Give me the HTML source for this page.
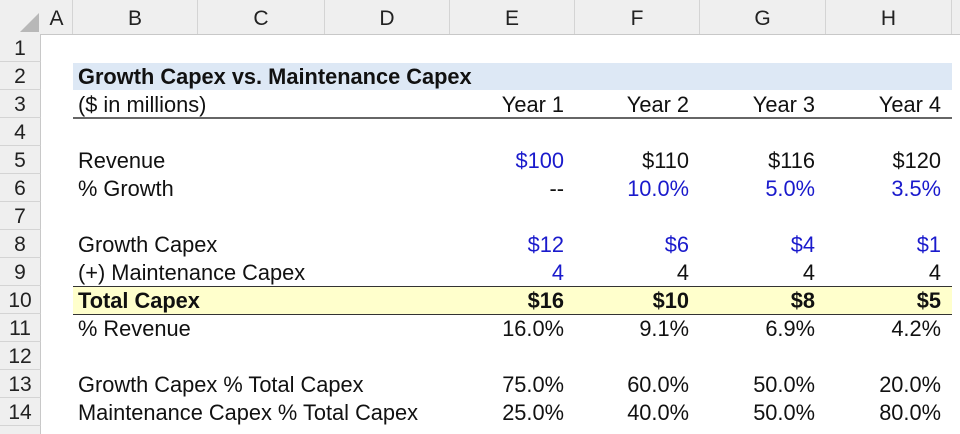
<!DOCTYPE html>
<html><head><style>
html,body{margin:0;width:960px;height:434px;overflow:hidden}
body{background:#fff;font-family:"Liberation Sans",Arial,sans-serif;position:relative}
.hdr{position:absolute;top:0;left:0;width:960px;height:34px;background:#efefef;border-bottom:1px solid #c8c8c8}
.ch{position:absolute;top:0;height:34px;line-height:38px;text-align:center;font-size:21px;color:#222;border-right:1px solid #d4d4d4;box-sizing:border-box}
.rh{position:absolute;left:0;width:41px;height:28px;line-height:30px;text-align:center;font-size:21px;color:#222;background:#efefef;border-bottom:1px solid #d4d4d4;border-right:1px solid #c8c8c8;box-sizing:border-box}
.t{position:absolute;font-size:21.8px;line-height:30px;color:#111;white-space:nowrap}
.r{text-align:right}
.b{color:#1a1acc}
.bd{font-weight:bold}
</style></head><body>
<div class="hdr"></div>
<svg style="position:absolute;left:20px;top:13px" width="20" height="20"><polygon points="19,0 19,19 0,19" fill="#b8b8b8"/></svg>
<div class="ch" style="left:41px;width:32px">A</div>
<div class="ch" style="left:73px;width:125px">B</div>
<div class="ch" style="left:198px;width:127px">C</div>
<div class="ch" style="left:325px;width:125px">D</div>
<div class="ch" style="left:450px;width:125px">E</div>
<div class="ch" style="left:575px;width:125px">F</div>
<div class="ch" style="left:700px;width:126px">G</div>
<div class="ch" style="left:826px;width:126px">H</div>
<div style="position:absolute;left:0;top:34px;width:41px;height:400px;background:#efefef"></div>
<div class="rh" style="top:34px">1</div><div class="rh" style="top:62px">2</div><div class="rh" style="top:90px">3</div><div class="rh" style="top:118px">4</div><div class="rh" style="top:146px">5</div><div class="rh" style="top:174px">6</div><div class="rh" style="top:202px">7</div><div class="rh" style="top:230px">8</div><div class="rh" style="top:258px">9</div><div class="rh" style="top:286px">10</div><div class="rh" style="top:314px">11</div><div class="rh" style="top:342px">12</div><div class="rh" style="top:370px">13</div><div class="rh" style="top:398px">14</div><div class="rh" style="top:426px"></div>
<div style="position:absolute;left:73px;top:63px;width:879px;height:27px;background:#dde8f5"></div>
<div style="position:absolute;left:73px;top:117px;width:879px;height:2px;background:#666"></div>
<div style="position:absolute;left:73px;top:286px;width:879px;height:29px;background:#ffffcc;border-top:1px solid #333;border-bottom:1px solid #333;box-sizing:border-box"></div>
<div class="t bd" style="left:78px;top:62px">Growth Capex vs. Maintenance Capex</div>
<div class="t" style="left:78px;top:90px">($ in millions)</div>
<div class="t r" style="right:396px;top:90px">Year 1</div><div class="t r" style="right:271px;top:90px">Year 2</div><div class="t r" style="right:145px;top:90px">Year 3</div><div class="t r" style="right:19px;top:90px">Year 4</div>
<div class="t" style="left:78px;top:146px">Revenue</div>
<div class="t r b" style="right:396px;top:146px">$100</div><div class="t r" style="right:271px;top:146px">$110</div><div class="t r" style="right:145px;top:146px">$116</div><div class="t r" style="right:19px;top:146px">$120</div>
<div class="t" style="left:78px;top:174px">% Growth</div>
<div class="t r" style="right:396px;top:174px">--</div><div class="t r b" style="right:271px;top:174px">10.0%</div><div class="t r b" style="right:145px;top:174px">5.0%</div><div class="t r b" style="right:19px;top:174px">3.5%</div>
<div class="t" style="left:78px;top:230px">Growth Capex</div>
<div class="t r b" style="right:396px;top:230px">$12</div><div class="t r b" style="right:271px;top:230px">$6</div><div class="t r b" style="right:145px;top:230px">$4</div><div class="t r b" style="right:19px;top:230px">$1</div>
<div class="t" style="left:78px;top:258px">(+) Maintenance Capex</div>
<div class="t r b" style="right:396px;top:258px">4</div><div class="t r" style="right:271px;top:258px">4</div><div class="t r" style="right:145px;top:258px">4</div><div class="t r" style="right:19px;top:258px">4</div>
<div class="t bd" style="left:78px;top:286px">Total Capex</div>
<div class="t r bd" style="right:396px;top:286px">$16</div><div class="t r bd" style="right:271px;top:286px">$10</div><div class="t r bd" style="right:145px;top:286px">$8</div><div class="t r bd" style="right:19px;top:286px">$5</div>
<div class="t" style="left:78px;top:314px">% Revenue</div>
<div class="t r" style="right:396px;top:314px">16.0%</div><div class="t r" style="right:271px;top:314px">9.1%</div><div class="t r" style="right:145px;top:314px">6.9%</div><div class="t r" style="right:19px;top:314px">4.2%</div>
<div class="t" style="left:78px;top:370px">Growth Capex % Total Capex</div>
<div class="t r" style="right:396px;top:370px">75.0%</div><div class="t r" style="right:271px;top:370px">60.0%</div><div class="t r" style="right:145px;top:370px">50.0%</div><div class="t r" style="right:19px;top:370px">20.0%</div>
<div class="t" style="left:78px;top:398px">Maintenance Capex % Total Capex</div>
<div class="t r" style="right:396px;top:398px">25.0%</div><div class="t r" style="right:271px;top:398px">40.0%</div><div class="t r" style="right:145px;top:398px">50.0%</div><div class="t r" style="right:19px;top:398px">80.0%</div>
</body></html>
